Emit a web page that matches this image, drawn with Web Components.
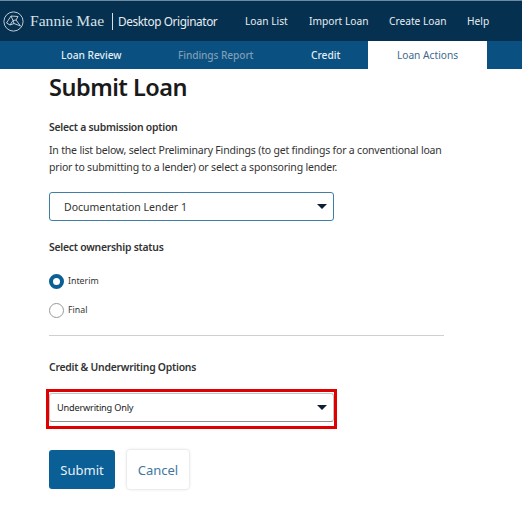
<!DOCTYPE html>
<html lang="en">
<head>
<meta charset="utf-8">
<title>Submit Loan</title>
<style>
  html, body { margin: 0; padding: 0; background: #fff; }
  body { font-family: "Noto Sans", "Open Sans", sans-serif; color: #222; width: 522px; height: 510px; overflow: hidden; }
</style>
</head>
<body>
<top-bar></top-bar>
<tab-bar></tab-bar>
<submit-page>
  <h1 slot="title">Submit Loan</h1>
</submit-page>

<script>
class TopBar extends HTMLElement {
  constructor() {
    super();
    this.attachShadow({ mode: "open" });
    this.shadowRoot.innerHTML = `
      <style>
        :host { display: flex; align-items: center; background: #06304f; border-top: 1px solid #6d8ba3; box-sizing: border-box; height: 41px; color: #e6edf2; }
        .logo { display: flex; align-items: center; margin-left: 3px; }
        svg { width: 21px; height: 21px; }
        .name { font-family: "Liberation Serif", serif; font-size: 15.6px; margin-left: 6px; color: #d5e0e8; width: 74px; white-space: nowrap; }
        .rule { width: 1px; height: 17px; background: #d5e0e8; margin: 0 5px 0 8px; }
        .product { font-size: 11.8px; white-space: nowrap; width: 99px; letter-spacing: -.4px; }
        nav { display: flex; margin-left: 28px; font-size: 10.2px; white-space: nowrap; }
        nav span:nth-child(1) { width: 64px; }
        nav span:nth-child(2) { width: 80px; }
        nav span:nth-child(3) { width: 78px; }
      </style>
      <div class="logo">
        <svg viewBox="0 0 21 21" fill="none" stroke="#cfdbe4" stroke-width=".9">
          <circle cx="10.5" cy="10.5" r="9.6"/>
          <path d="M3.5 12 L8 5 L15 5.5 L13 9 L17.5 15 L11 12.5 L7 14 L3.5 12 M8 5 L10 9.5 L13 9 M7 14 L10 9.5 L11 12.5"/>
        </svg>
        <span class="name">Fannie Mae</span>
        <span class="rule"></span>
        <span class="product">Desktop Originator</span>
      </div>
      <nav>
        <span>Loan List</span><span>Import Loan</span><span>Create Loan</span><span>Help</span>
      </nav>`;
  }
}

class TabBar extends HTMLElement {
  constructor() {
    super();
    this.attachShadow({ mode: "open" });
    this.shadowRoot.innerHTML = `
      <style>
        :host { display: flex; height: 28px; background: #0a5080; font-size: 10.2px; font-weight: 500; color: #e4edf3; white-space: nowrap; }
        div { display: flex; align-items: center; height: 100%; }
        .review { width: 117px; margin-left: 61px; }
        .findings { width: 133px; color: #7f9db5; letter-spacing: -.1px; }
        .credit { width: 57px; }
        .actions { width: 119px; justify-content: center; background: #fff; color: #3d6a8c; font-weight: 400; }
      </style>
      <div class="review">Loan Review</div>
      <div class="findings">Findings Report</div>
      <div class="credit">Credit</div>
      <div class="actions">Loan Actions</div>`;
  }
}

class SelectBox extends HTMLElement {
  constructor() {
    super();
    this.attachShadow({ mode: "open" });
    this.shadowRoot.innerHTML = `
      <style>
        :host { display: flex; align-items: center; box-sizing: border-box; width: 285px; height: 29px; background: #fff; border: 1px solid #c4c4c4; border-bottom-color: #8f8f8f; border-radius: 3px; font-size: 9.2px; letter-spacing: -.2px; color: #222; padding: 0 6px 0 7px; }
        :host([primary]) { border-color: #3f7fa6; font-size: 10.5px; letter-spacing: 0; padding-left: 14px; color: #333; }
        .value { flex: 1; white-space: nowrap; }
        .arrow { width: 0; height: 0; border-left: 5px solid transparent; border-right: 5px solid transparent; border-top: 5px solid #0c1f33; }
      </style>
      <span class="value"><slot></slot></span>
      <span class="arrow"></span>`;
  }
}

class RadioOption extends HTMLElement {
  constructor() {
    super();
    this.attachShadow({ mode: "open" });
    this.shadowRoot.innerHTML = `
      <style>
        :host { display: flex; align-items: center; height: 16px; font-size: 8.8px; color: #333; }
        .dot { box-sizing: border-box; width: 15px; height: 15px; border-radius: 50%; border: 1px solid #999; margin-right: 4px; background: #fff; }
        :host([checked]) .dot { border: 4.5px solid #0a5f96; }
      </style>
      <span class="dot"></span><slot></slot>`;
  }
}

class ActionButton extends HTMLElement {
  constructor() {
    super();
    this.attachShadow({ mode: "open" });
    this.shadowRoot.innerHTML = `
      <style>
        :host { display: flex; align-items: center; justify-content: center; box-sizing: border-box; height: 39px; width: 66px; border-radius: 3px; background: #0a5f96; color: #e8f0f6; font-size: 13px; }
        :host([plain]) { width: 62px; background: #fff; color: #3f77a3; box-shadow: 0 0 3px rgba(0,0,0,.22); }
      </style>
      <slot></slot>`;
  }
}

class SubmitPage extends HTMLElement {
  constructor() {
    super();
    this.attachShadow({ mode: "open" });
    this.shadowRoot.innerHTML = `
      <style>
        :host { display: block; padding: 0 0 0 49px; }
        ::slotted(h1) { margin: 0; font-size: 23.5px; font-weight: 600; letter-spacing: -.5px; line-height: 36px; color: #1a1a1a; }
        h2 { margin: 0; font-size: 10.4px; font-weight: 600; letter-spacing: -.25px; line-height: 14px; color: #333; }
        p { margin: 8px 0 0; font-size: 10.5px; letter-spacing: -.19px; line-height: 17px; color: #333; width: 400px; white-space: nowrap; }
        .head1 { margin-top: 15px; }
        select-box { margin-top: 16px; }
        .head2 { margin-top: 19px; }
        .radios { display: flex; flex-direction: column; gap: 13px; margin-top: 19px; }
        hr { width: 395px; height: 1px; border: 0; background: #cfcfcf; margin: 17px 0 0; }
        .head3 { margin-top: 24px; }
        .mark { width: 291px; box-sizing: border-box; margin: 15px 0 0 -3px; border: 3px solid #e00000; height: 40px; display: flex; align-items: flex-start; }
        .mark select-box { margin: 1px 0 0; height: 29px; }
        .actions { display: flex; gap: 12px; margin-top: 21px; }
      </style>
      <slot name="title"></slot>
      <h2 class="head1">Select a submission option</h2>
      <p>In the list below, select Preliminary Findings (to get findings for a conventional loan<br>prior to submitting to a lender) or select a sponsoring lender.</p>
      <select-box primary>Documentation Lender 1</select-box>
      <h2 class="head2">Select ownership status</h2>
      <div class="radios">
        <radio-option checked>Interim</radio-option>
        <radio-option>Final</radio-option>
      </div>
      <hr>
      <h2 class="head3">Credit &amp; Underwriting Options</h2>
      <div class="mark"><select-box>Underwriting Only</select-box></div>
      <div class="actions">
        <action-button>Submit</action-button>
        <action-button plain>Cancel</action-button>
      </div>`;
  }
}

customElements.define("top-bar", TopBar);
customElements.define("tab-bar", TabBar);
customElements.define("select-box", SelectBox);
customElements.define("radio-option", RadioOption);
customElements.define("action-button", ActionButton);
customElements.define("submit-page", SubmitPage);
</script>
</body>
</html>
